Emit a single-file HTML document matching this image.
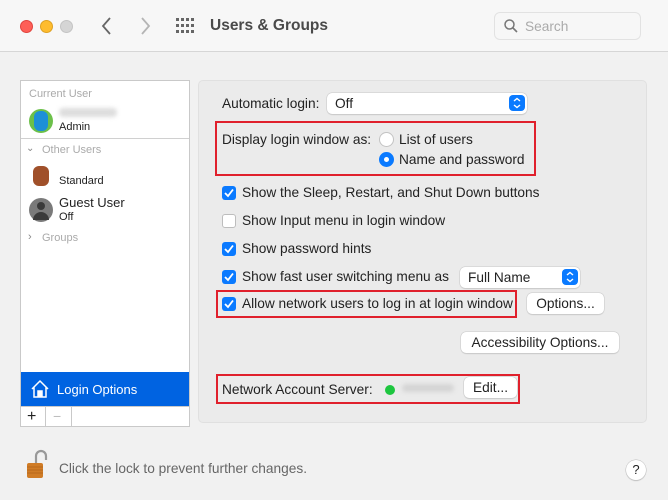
<!DOCTYPE html>
<html><head><meta charset="utf-8"><style>
*{margin:0;padding:0;box-sizing:border-box}
body{width:668px;height:500px;overflow:hidden;background:#f1f1f1;font-family:"Liberation Sans",sans-serif;font-size:13.7px;color:#222;position:relative}
.a{position:absolute}
.title{left:0;top:0;width:668px;height:52px;background:#f7f7f7;border-bottom:1px solid #d6d6d6}
.dot{width:13px;height:13px;border-radius:50%;top:20px}
.cb{width:14px;height:14px;border-radius:3px;background:#0a7aff}
.cb svg{position:absolute;left:2px;top:2px}
.cbo{width:14px;height:14px;border-radius:3px;background:#fff;border:1px solid #bdbdbd}
.btn{background:#fff;border-radius:5px;box-shadow:0 0 0 .5px #c8c8c8,0 1px 1px rgba(0,0,0,.15);height:21px;line-height:21px;text-align:center}
.red{border:2px solid #e0202c}
.grey{color:#aaa;font-size:11px}
.stp{width:16px;height:16px;border-radius:4px;background:#0a7aff}
</style></head><body>
<div class="a title"></div>
<div class="a dot" style="left:20px;background:#fe5f57;border:.5px solid #e0443e"></div>
<div class="a dot" style="left:40px;background:#febc2e;border:.5px solid #dea123"></div>
<div class="a dot" style="left:60px;background:#d5d5d5;border:.5px solid #c4c4c4"></div>
<svg class="a" style="left:100px;top:15px" width="14" height="22"><path d="M10 3 L3 11 L10 19" stroke="#666" stroke-width="1.8" fill="none"/></svg>
<svg class="a" style="left:138px;top:15px" width="14" height="22"><path d="M4 3 L11 11 L4 19" stroke="#b5b5b5" stroke-width="1.8" fill="none"/></svg>
<svg class="a" style="left:176px;top:18px" width="18" height="16" fill="#666">
<rect x="0" y="0" width="3" height="3"/><rect x="5" y="0" width="3" height="3"/><rect x="10" y="0" width="3" height="3"/><rect x="15" y="0" width="3" height="3"/>
<rect x="0" y="6" width="3" height="3"/><rect x="5" y="6" width="3" height="3"/><rect x="10" y="6" width="3" height="3"/><rect x="15" y="6" width="3" height="3"/>
<rect x="0" y="12" width="3" height="3"/><rect x="5" y="12" width="3" height="3"/><rect x="10" y="12" width="3" height="3"/><rect x="15" y="12" width="3" height="3"/></svg>
<div class="a" style="left:210px;top:17px;font-size:15.5px;font-weight:bold;color:#4a4a4a">Users &amp; Groups</div>
<div class="a" style="left:494px;top:12px;width:147px;height:28px;border:1px solid #e2e2e2;border-radius:6px;background:#f7f7f7"></div>
<svg class="a" style="left:504px;top:19px" width="14" height="14"><circle cx="5.5" cy="5.5" r="4.5" stroke="#777" stroke-width="1.5" fill="none"/><path d="M9 9 L13 13" stroke="#777" stroke-width="1.6"/></svg>
<div class="a" style="left:525px;top:19px;color:#aaa">Search</div>

<!-- sidebar -->
<div class="a" style="left:20px;top:80px;width:170px;height:347px;background:#fff;border:1px solid #c9c9c9"></div>
<div class="a grey" style="left:29px;top:88px">Current User</div>
<div class="a" style="left:29px;top:109px;width:24px;height:24px;border-radius:50%;background:#6cc04a"></div>
<div class="a" style="left:34px;top:111px;width:14px;height:20px;border-radius:6px;background:#1d8fd8"></div>
<div class="a" style="left:59px;top:108px;width:58px;height:9px;background:#ddd;border-radius:4px;filter:blur(2px)"></div>
<div class="a" style="left:59px;top:121px;font-size:11px">Admin</div>
<div class="a" style="left:21px;top:138px;width:168px;height:1px;background:#d0d0d0"></div>
<div class="a" style="left:26px;top:143px;color:#888;font-size:10px">⌄</div>
<div class="a grey" style="left:42px;top:144px">Other Users</div>
<div class="a" style="left:33px;top:166px;width:16px;height:20px;border-radius:6px;background:#a0502a"></div>
<div class="a" style="left:59px;top:175px;font-size:11px">Standard</div>
<div class="a" style="left:29px;top:198px;width:24px;height:24px;border-radius:50%;background:#7a7a7a"></div>
<div class="a" style="left:37px;top:202px;width:8px;height:8px;border-radius:50%;background:#3a3a3a"></div>
<div class="a" style="left:33px;top:212px;width:16px;height:8px;border-radius:8px 8px 0 0;background:#3a3a3a"></div>
<div class="a" style="left:59px;top:195px;font-size:13px">Guest User</div>
<div class="a" style="left:59px;top:211px;font-size:11px">Off</div>
<div class="a" style="left:28px;top:231px;color:#888;font-size:11px">›</div>
<div class="a grey" style="left:42px;top:232px">Groups</div>
<div class="a" style="left:21px;top:372px;width:168px;height:34px;background:#0063e1"></div>
<svg class="a" style="left:30px;top:379px" width="20" height="20"><path d="M2 10 L10 2 L18 10 M4 8 V18 H16 V8 M8 18 V12 H12 V18" stroke="#fff" stroke-width="1.5" fill="none"/><rect x="8" y="12" width="4" height="6" fill="#fff"/></svg>
<div class="a" style="left:57px;top:382px;color:#fff;font-size:13px">Login Options</div>
<div class="a" style="left:21px;top:406px;width:168px;height:1px;background:#c9c9c9"></div>
<div class="a" style="left:45px;top:407px;width:1px;height:19px;background:#c9c9c9"></div>
<div class="a" style="left:71px;top:407px;width:1px;height:19px;background:#c9c9c9"></div>
<div class="a" style="left:27px;top:408px;font-size:16px">+</div>
<div class="a" style="left:53px;top:408px;font-size:14px;color:#bbb">−</div>

<!-- right panel -->
<div class="a" style="left:198px;top:80px;width:449px;height:343px;background:#ebebeb;border:1px solid #e0e0e0;border-radius:5px"></div>
<div class="a" style="left:222px;top:96px">Automatic login:</div>
<div class="a btn" style="left:327px;top:93px;width:200px;text-align:left;padding-left:8px">Off</div>
<div class="a stp" style="left:509px;top:95px"></div>
<svg class="a" style="left:509px;top:95px" width="16" height="16"><path d="M5 6 L8 3.5 L11 6 M5 10 L8 12.5 L11 10" stroke="#fff" stroke-width="1.4" fill="none"/></svg>
<div class="a red" style="left:215px;top:121px;width:321px;height:55px"></div>
<div class="a" style="left:222px;top:132px">Display login window as:</div>
<div class="a" style="left:379px;top:132px;width:15px;height:15px;border-radius:50%;background:#fff;border:1px solid #c3c3c3"></div>
<div class="a" style="left:399px;top:132px">List of users</div>
<div class="a" style="left:379px;top:152px;width:15px;height:15px;border-radius:50%;background:#0a7aff"></div>
<div class="a" style="left:384px;top:157px;width:5px;height:5px;border-radius:50%;background:#fff"></div>
<div class="a" style="left:399px;top:152px">Name and password</div>

<div class="a cb" style="left:222px;top:186px"><svg width="10" height="10"><path d="M1 5 L4 8 L9 1.5" stroke="#fff" stroke-width="1.8" fill="none"/></svg></div>
<div class="a" style="left:242px;top:185px">Show the Sleep, Restart, and Shut Down buttons</div>
<div class="a cbo" style="left:222px;top:214px"></div>
<div class="a" style="left:242px;top:213px">Show Input menu in login window</div>
<div class="a cb" style="left:222px;top:242px"><svg width="10" height="10"><path d="M1 5 L4 8 L9 1.5" stroke="#fff" stroke-width="1.8" fill="none"/></svg></div>
<div class="a" style="left:242px;top:241px">Show password hints</div>
<div class="a cb" style="left:222px;top:270px"><svg width="10" height="10"><path d="M1 5 L4 8 L9 1.5" stroke="#fff" stroke-width="1.8" fill="none"/></svg></div>
<div class="a" style="left:242px;top:269px">Show fast user switching menu as</div>
<div class="a btn" style="left:460px;top:267px;width:120px;text-align:left;padding-left:8px">Full Name</div>
<div class="a stp" style="left:562px;top:269px"></div>
<svg class="a" style="left:562px;top:269px" width="16" height="16"><path d="M5 6 L8 3.5 L11 6 M5 10 L8 12.5 L11 10" stroke="#fff" stroke-width="1.4" fill="none"/></svg>
<div class="a red" style="left:216px;top:290px;width:301px;height:28px"></div>
<div class="a cb" style="left:222px;top:297px"><svg width="10" height="10"><path d="M1 5 L4 8 L9 1.5" stroke="#fff" stroke-width="1.8" fill="none"/></svg></div>
<div class="a" style="left:242px;top:296px">Allow network users to log in at login window</div>
<div class="a btn" style="left:527px;top:293px;width:77px">Options...</div>
<div class="a btn" style="left:461px;top:332px;width:158px">Accessibility Options...</div>
<div class="a red" style="left:216px;top:374px;width:304px;height:30px"></div>
<div class="a" style="left:222px;top:382px">Network Account Server:</div>
<div class="a" style="left:385px;top:385px;width:10px;height:10px;border-radius:50%;background:#1ec63f"></div>
<div class="a" style="left:402px;top:384px;width:52px;height:8px;background:#d4d4d4;border-radius:4px;filter:blur(2px)"></div>
<div class="a btn" style="left:464px;top:377px;width:53px">Edit...</div>

<!-- footer -->
<svg class="a" style="left:24px;top:448px" width="24" height="32"><path d="M12 16 V8 A5 5 0 0 1 22 8 V12" stroke="#999" stroke-width="2.2" fill="none"/><rect x="3" y="15" width="16" height="15" rx="2" fill="#d07c26"/><path d="M3 19 H19 M3 22 H19 M3 25 H19" stroke="#b0601a" stroke-width=".7"/></svg>
<div class="a" style="left:59px;top:461px;color:#666">Click the lock to prevent further changes.</div>
<div class="a" style="left:626px;top:460px;width:20px;height:20px;border-radius:50%;background:#fff;box-shadow:0 0 0 .5px #bbb,0 1px 1px rgba(0,0,0,.2);text-align:center;line-height:20px;font-size:13px">?</div>
</body></html>
